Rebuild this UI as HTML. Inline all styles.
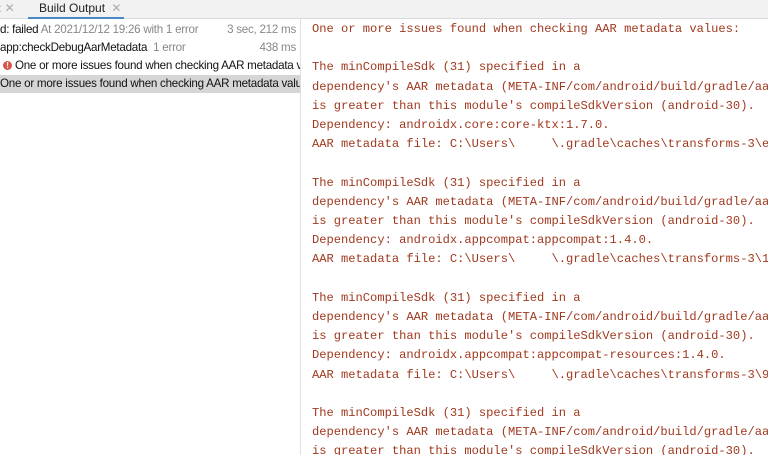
<!DOCTYPE html>
<html><head><style>
body{margin:0;width:768px;height:455px;overflow:hidden;background:#fff;position:relative;font-family:"Liberation Sans",sans-serif}
.tabs{position:absolute;left:0;top:0;width:768px;height:18px;background:#f2f2f2;border-bottom:1px solid #d9d9d9}
.t{position:absolute;top:1px;font-size:12px;color:#222}
.x{color:#aaa;font-size:12px}
.ul{position:absolute;left:28px;top:17px;width:96px;height:2px;background:#4a88c7}
.left{position:absolute;left:0;top:19px;width:300px;height:436px;border-right:1px solid #e0e0e0;overflow:hidden}
.row{position:absolute;left:0;width:300px;height:18px;font-size:11.6px;letter-spacing:-0.25px;color:#111;white-space:nowrap;overflow:hidden;line-height:18px}
.g{color:#888}
.r{position:absolute;right:4px;top:0;color:#888;background:#fff;padding-left:4px}
.mono{position:absolute;left:312px;top:20px;width:456px;height:435px;overflow:hidden;font-family:"Liberation Mono",monospace;font-size:12.1px;color:#a0391f;white-space:pre;line-height:19.2px}
.err{display:inline-block;width:9px;height:9px;border-radius:50%;background:#d9534f;color:#fff;font-size:8px;line-height:9px;text-align:center;font-weight:bold;vertical-align:middle}
</style></head><body>
<div class="tabs">
<span class="t" style="left:-2px">: <span class="x">✕</span></span>
<span class="t" style="left:39px">Build Output <span class="x" style="margin-left:3px">✕</span></span>
<div class="ul"></div>
</div>
<div class="left">
<div class="row" style="top:2px">d: failed <span class="g">At 2021/12/12 19:26 with 1 error</span><span class="r">3 sec, 212 ms</span></div>
<div class="row" style="top:20px">app:checkDebugAarMetadata <span class="g">&nbsp;1 error</span><span class="r">438 ms</span></div>
<div class="row" style="top:38px">&nbsp;<span class="err">!</span> One or more issues found when checking AAR metadata values:</div>
<div class="row" style="top:56px;background:#d6d6d6">One or more issues found when checking AAR metadata values:</div>
</div>
<div class="mono">One or more issues found when checking AAR metadata values:

The minCompileSdk (31) specified in a
dependency's AAR metadata (META-INF/com/android/build/gradle/aar-metadata.properties)
is greater than this module's compileSdkVersion (android-30).
Dependency: androidx.core:core-ktx:1.7.0.
AAR metadata file: C:\Users\     \.gradle\caches\transforms-3\e

The minCompileSdk (31) specified in a
dependency's AAR metadata (META-INF/com/android/build/gradle/aar-metadata.properties)
is greater than this module's compileSdkVersion (android-30).
Dependency: androidx.appcompat:appcompat:1.4.0.
AAR metadata file: C:\Users\     \.gradle\caches\transforms-3\1

The minCompileSdk (31) specified in a
dependency's AAR metadata (META-INF/com/android/build/gradle/aar-metadata.properties)
is greater than this module's compileSdkVersion (android-30).
Dependency: androidx.appcompat:appcompat-resources:1.4.0.
AAR metadata file: C:\Users\     \.gradle\caches\transforms-3\9

The minCompileSdk (31) specified in a
dependency's AAR metadata (META-INF/com/android/build/gradle/aar-metadata.properties)
is greater than this module's compileSdkVersion (android-30).</div>
</body></html>
